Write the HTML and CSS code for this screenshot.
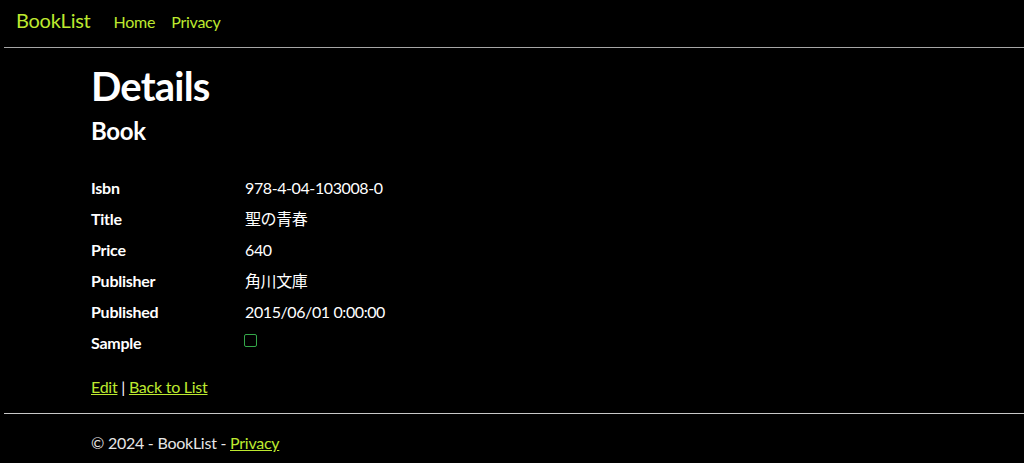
FILE: index.html
```html
<!DOCTYPE html>
<html lang="ja">
<head>
  <meta charset="utf-8">
  <meta name="viewport" content="width=device-width, initial-scale=1.0">
  <title>Details - BookList</title>
  <link rel="stylesheet" href="styles.css">
</head>
<body>
  <header class="site-header">
    <nav class="navbar">
      <a class="navbar-brand" href="#">BookList</a>
      <ul class="nav-links">
        <li><a href="#">Home</a></li>
        <li><a href="#">Privacy</a></li>
      </ul>
    </nav>
  </header>

  <main class="container">
    <h1>Details</h1>
    <div>
      <h4>Book</h4>
      <dl class="details">
        <dt>Isbn</dt>
        <dd>978-4-04-103008-0</dd>
        <dt>Title</dt>
        <dd>聖の青春</dd>
        <dt>Price</dt>
        <dd>640</dd>
        <dt>Publisher</dt>
        <dd>角川文庫</dd>
        <dt>Published</dt>
        <dd>2015/06/01 0:00:00</dd>
        <dt>Sample</dt>
        <dd><input class="check-box" type="checkbox" disabled></dd>
      </dl>
    </div>
    <div class="actions">
      <a href="#">Edit</a> | <a href="#">Back to List</a>
    </div>
  </main>

  <footer class="site-footer">
    <div class="container">
      &copy; 2024 - BookList - <a href="#">Privacy</a>
    </div>
  </footer>
</body>
</html>
```

FILE: styles.css
```css
html, body {
  margin: 0;
  padding: 0;
}

body {
  font-family: Lato, "Noto Sans CJK JP", sans-serif;
  font-size: 16px;
  line-height: 24px;
  letter-spacing: -0.25px;
  background-color: #000;
  color: #fff;
}

a {
  color: #bde92f;
}

.site-header {
  margin-left: 4px;
  border-bottom: 1px solid #a6a6a6;
}

.navbar {
  display: flex;
  align-items: baseline;
  height: 47px;
  padding: 0 12px;
  box-sizing: border-box;
  padding-top: 5px;
}

.navbar-brand {
  font-size: 20px;
  line-height: 30px;
  text-decoration: none;
  margin-right: 23px;
}

.nav-links {
  display: flex;
  list-style: none;
  margin: 0;
  padding: 0;
  gap: 16px;
}

.nav-links a {
  text-decoration: none;
}

.container {
  max-width: 866px;
  padding: 0 12px;
  margin: 0 auto;
  box-sizing: border-box;
}

h1 {
  font-size: 40px;
  line-height: 48px;
  font-weight: 700;
  letter-spacing: -0.8px;
  margin: 14px 0 6px;
}

h4 {
  font-size: 24px;
  line-height: 29px;
  font-weight: 700;
  letter-spacing: -0.3px;
  margin: 0;
}

.details {
  display: grid;
  grid-template-columns: 154px 1fr;
  row-gap: 7px;
  margin: 31px 0 20px;
}

.details dt {
  font-weight: 700;
}

.details dd {
  margin: 0;
  letter-spacing: -0.4px;
}

.check-box {
  -webkit-appearance: none;
  appearance: none;
  width: 13px;
  height: 13px;
  margin: 0 0 0 -1px;
  border: 1px solid #34a84a;
  border-radius: 2px;
  background: #000;
  vertical-align: 2px;
}

.site-footer {
  margin-left: 4px;
  margin-top: 14px;
  border-top: 1px solid #c8c8c8;
  padding-top: 17px;
  color: #e6e6e6;
}

.site-footer .container {
  margin-left: calc((100vw - 866px) / 2 - 4px);
}
```
